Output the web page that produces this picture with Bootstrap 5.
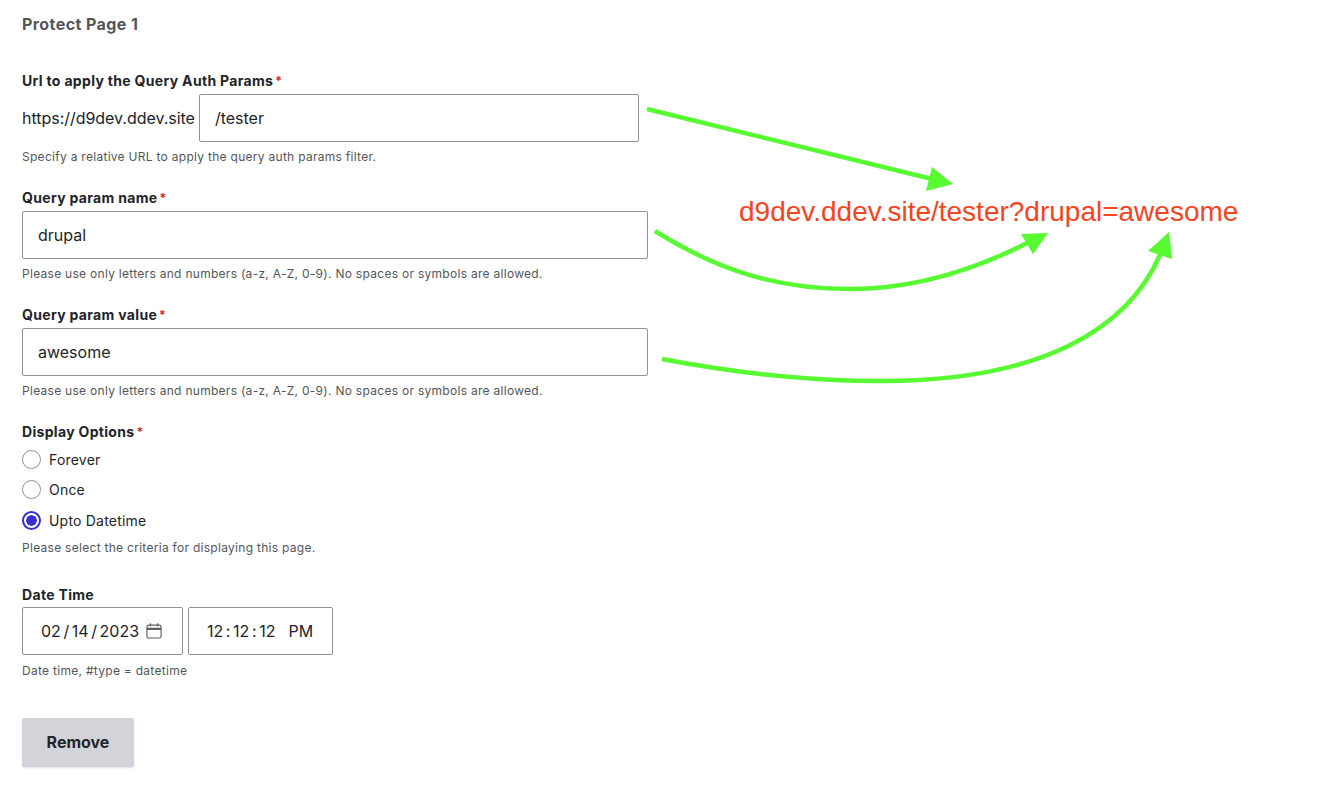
<!DOCTYPE html>
<html lang="en">
<head>
<meta charset="utf-8">
<title>Protect Page</title>
<link rel="stylesheet" href="https://cdn.jsdelivr.net/npm/bootstrap@5.3.0/dist/css/bootstrap.min.css">
<style>
html,body{height:100%;overflow:hidden;}
body{font-family:Inter,"Liberation Sans",sans-serif;color:#222330;background:#fff;position:relative;}
.page-wrap{width:626px;margin-left:22px;padding-top:15px;}
.pane-title{font-size:16px;line-height:18px;font-weight:700;color:#55565b;margin:0 0 39px;letter-spacing:.42px;}
.field-block{margin-bottom:23px;}
.field-label{display:block;font-size:14px;line-height:18px;font-weight:700;color:#232429;margin:0 0 4px;letter-spacing:.32px;}
.req{color:#d72222;margin-left:2px;font-size:12px;vertical-align:1px;}
.field-input.form-control{height:48px;border:1px solid #919297;border-radius:2px;padding:0 15px;font-size:16px;color:#232429;box-shadow:none;}
.field-hint{font-size:12px;line-height:18px;color:#55565b;margin-top:6px;letter-spacing:.285px;}
.prefix-text{font-size:16px;color:#232429;white-space:nowrap;margin-right:4px;letter-spacing:-.03px;}
.url-wrap{width:617px;}
.radio-group-label{margin-bottom:3px;}
.radio-line{height:30.5px;margin:0;padding:0;gap:8px;}
.radio-line .form-check-input{width:19px;height:19px;margin:0;float:none;border:1px solid #919297;flex:none;}
.radio-line .form-check-input:checked{background-color:#fff;border:2px solid #3b2fcf;background-image:radial-gradient(circle,#3b2fcf 0,#3b2fcf 5px,transparent 5.5px);}
.radio-line label{font-size:14px;color:#232429;letter-spacing:.2px;}
.radios-block{margin-bottom:29px;}
.radios-hint{margin-top:3px;}
.stamp-label{margin-bottom:3px;}
.stamp-box.form-control{display:flex;align-items:center;gap:2.6px;width:161px;height:48px;border:1px solid #919297;border-radius:2px;padding:0 0 0 18px;font-size:16px;color:#232429;}
.stamp-box.stamp-time{width:145px;}
.stamp-ampm{margin-left:10.5px;}
.stamp-cal{margin-left:4px;flex:none;}
.stamp-gap{gap:5px;}
.stamp-hint{margin-top:7px;}
.remove-btn.btn{width:112px;height:49px;background:#d3d4d9;border:0;border-radius:2px;color:#232429;font-weight:700;font-size:16px;box-shadow:0 1px 2px rgba(0,0,0,.12);padding:0;margin-top:15px;}
.annot-layer{position:absolute;left:0;top:0;pointer-events:none;}
.annot-text{position:absolute;left:739px;top:194.5px;font-family:"Liberation Sans",Arial,sans-serif;font-size:28px;line-height:34px;color:#f4451f;white-space:nowrap;}
</style>
</head>
<body>
<main class="page-wrap">
  <h2 class="pane-title">Protect Page 1</h2>

  <div class="field-block">
    <label class="field-label" for="u1">Url to apply the Query Auth Params<span class="req">*</span></label>
    <div class="d-flex align-items-center url-wrap">
      <span class="prefix-text">https://d9dev.ddev.site</span>
      <input id="u1" class="form-control field-input" type="text" value="/tester">
    </div>
    <div class="field-hint">Specify a relative URL to apply the query auth params filter.</div>
  </div>

  <div class="field-block">
    <label class="field-label" for="u2">Query param name<span class="req">*</span></label>
    <input id="u2" class="form-control field-input" type="text" value="drupal">
    <div class="field-hint">Please use only letters and numbers (a-z, A-Z, 0-9). No spaces or symbols are allowed.</div>
  </div>

  <div class="field-block">
    <label class="field-label" for="u3">Query param value<span class="req">*</span></label>
    <input id="u3" class="form-control field-input" type="text" value="awesome">
    <div class="field-hint">Please use only letters and numbers (a-z, A-Z, 0-9). No spaces or symbols are allowed.</div>
  </div>

  <div class="field-block radios-block">
    <div class="field-label radio-group-label">Display Options<span class="req">*</span></div>
    <div class="form-check d-flex align-items-center radio-line">
      <input class="form-check-input" type="radio" name="disp" id="r1">
      <label class="form-check-label" for="r1">Forever</label>
    </div>
    <div class="form-check d-flex align-items-center radio-line">
      <input class="form-check-input" type="radio" name="disp" id="r2">
      <label class="form-check-label" for="r2">Once</label>
    </div>
    <div class="form-check d-flex align-items-center radio-line">
      <input class="form-check-input" type="radio" name="disp" id="r3" checked>
      <label class="form-check-label" for="r3">Upto Datetime</label>
    </div>
    <div class="field-hint radios-hint">Please select the criteria for displaying this page.</div>
  </div>

  <div class="field-block">
    <div class="field-label stamp-label">Date Time</div>
    <div class="d-flex stamp-gap">
      <div class="form-control stamp-box">
        <span>02</span><span>/</span><span>14</span><span>/</span><span>2023</span>
        <svg class="stamp-cal" width="16" height="16" viewBox="0 0 17 17" fill="none" stroke="#5c5c60" stroke-width="1.2" aria-hidden="true"><rect x="1" y="2.2" width="15" height="13.8" rx="2"/><path d="M1 6.2H16" stroke-width="2.4"/><path d="M4.6 .6V3M12.4 .6V3" stroke-linecap="round"/></svg>
      </div>
      <div class="form-control stamp-box stamp-time">
        <span>12</span><span>:</span><span>12</span><span>:</span><span>12</span><span class="stamp-ampm">PM</span>
      </div>
    </div>
    <div class="field-hint stamp-hint">Date time, #type = datetime</div>
  </div>

  <button type="button" class="btn remove-btn">Remove</button>
</main>

<svg class="annot-layer" width="1344" height="788" viewBox="0 0 1344 788" aria-hidden="true">
  <g fill="none" stroke="#58fb31" stroke-width="4.5">
    <path d="M647 109L932 179"/>
    <path d="M655 231C720 272 780 289 850 289C915 289 975 270 1031 241"/>
    <path d="M662 359C730 372 810 381 882 381C1040 381 1130 330 1162 250"/>
  </g>
  <g fill="#58fb31">
    <path d="M953 184L932 167L926 191Z"/>
    <path d="M1048 233L1021 234L1033 254Z"/>
    <path d="M1169 232L1148 251L1172 259Z"/>
  </g>
</svg>
<div class="annot-text">d9dev.ddev.site/tester?drupal=awesome</div>

<script src="https://cdn.jsdelivr.net/npm/bootstrap@5.3.0/dist/js/bootstrap.bundle.min.js"></script>
</body>
</html>
